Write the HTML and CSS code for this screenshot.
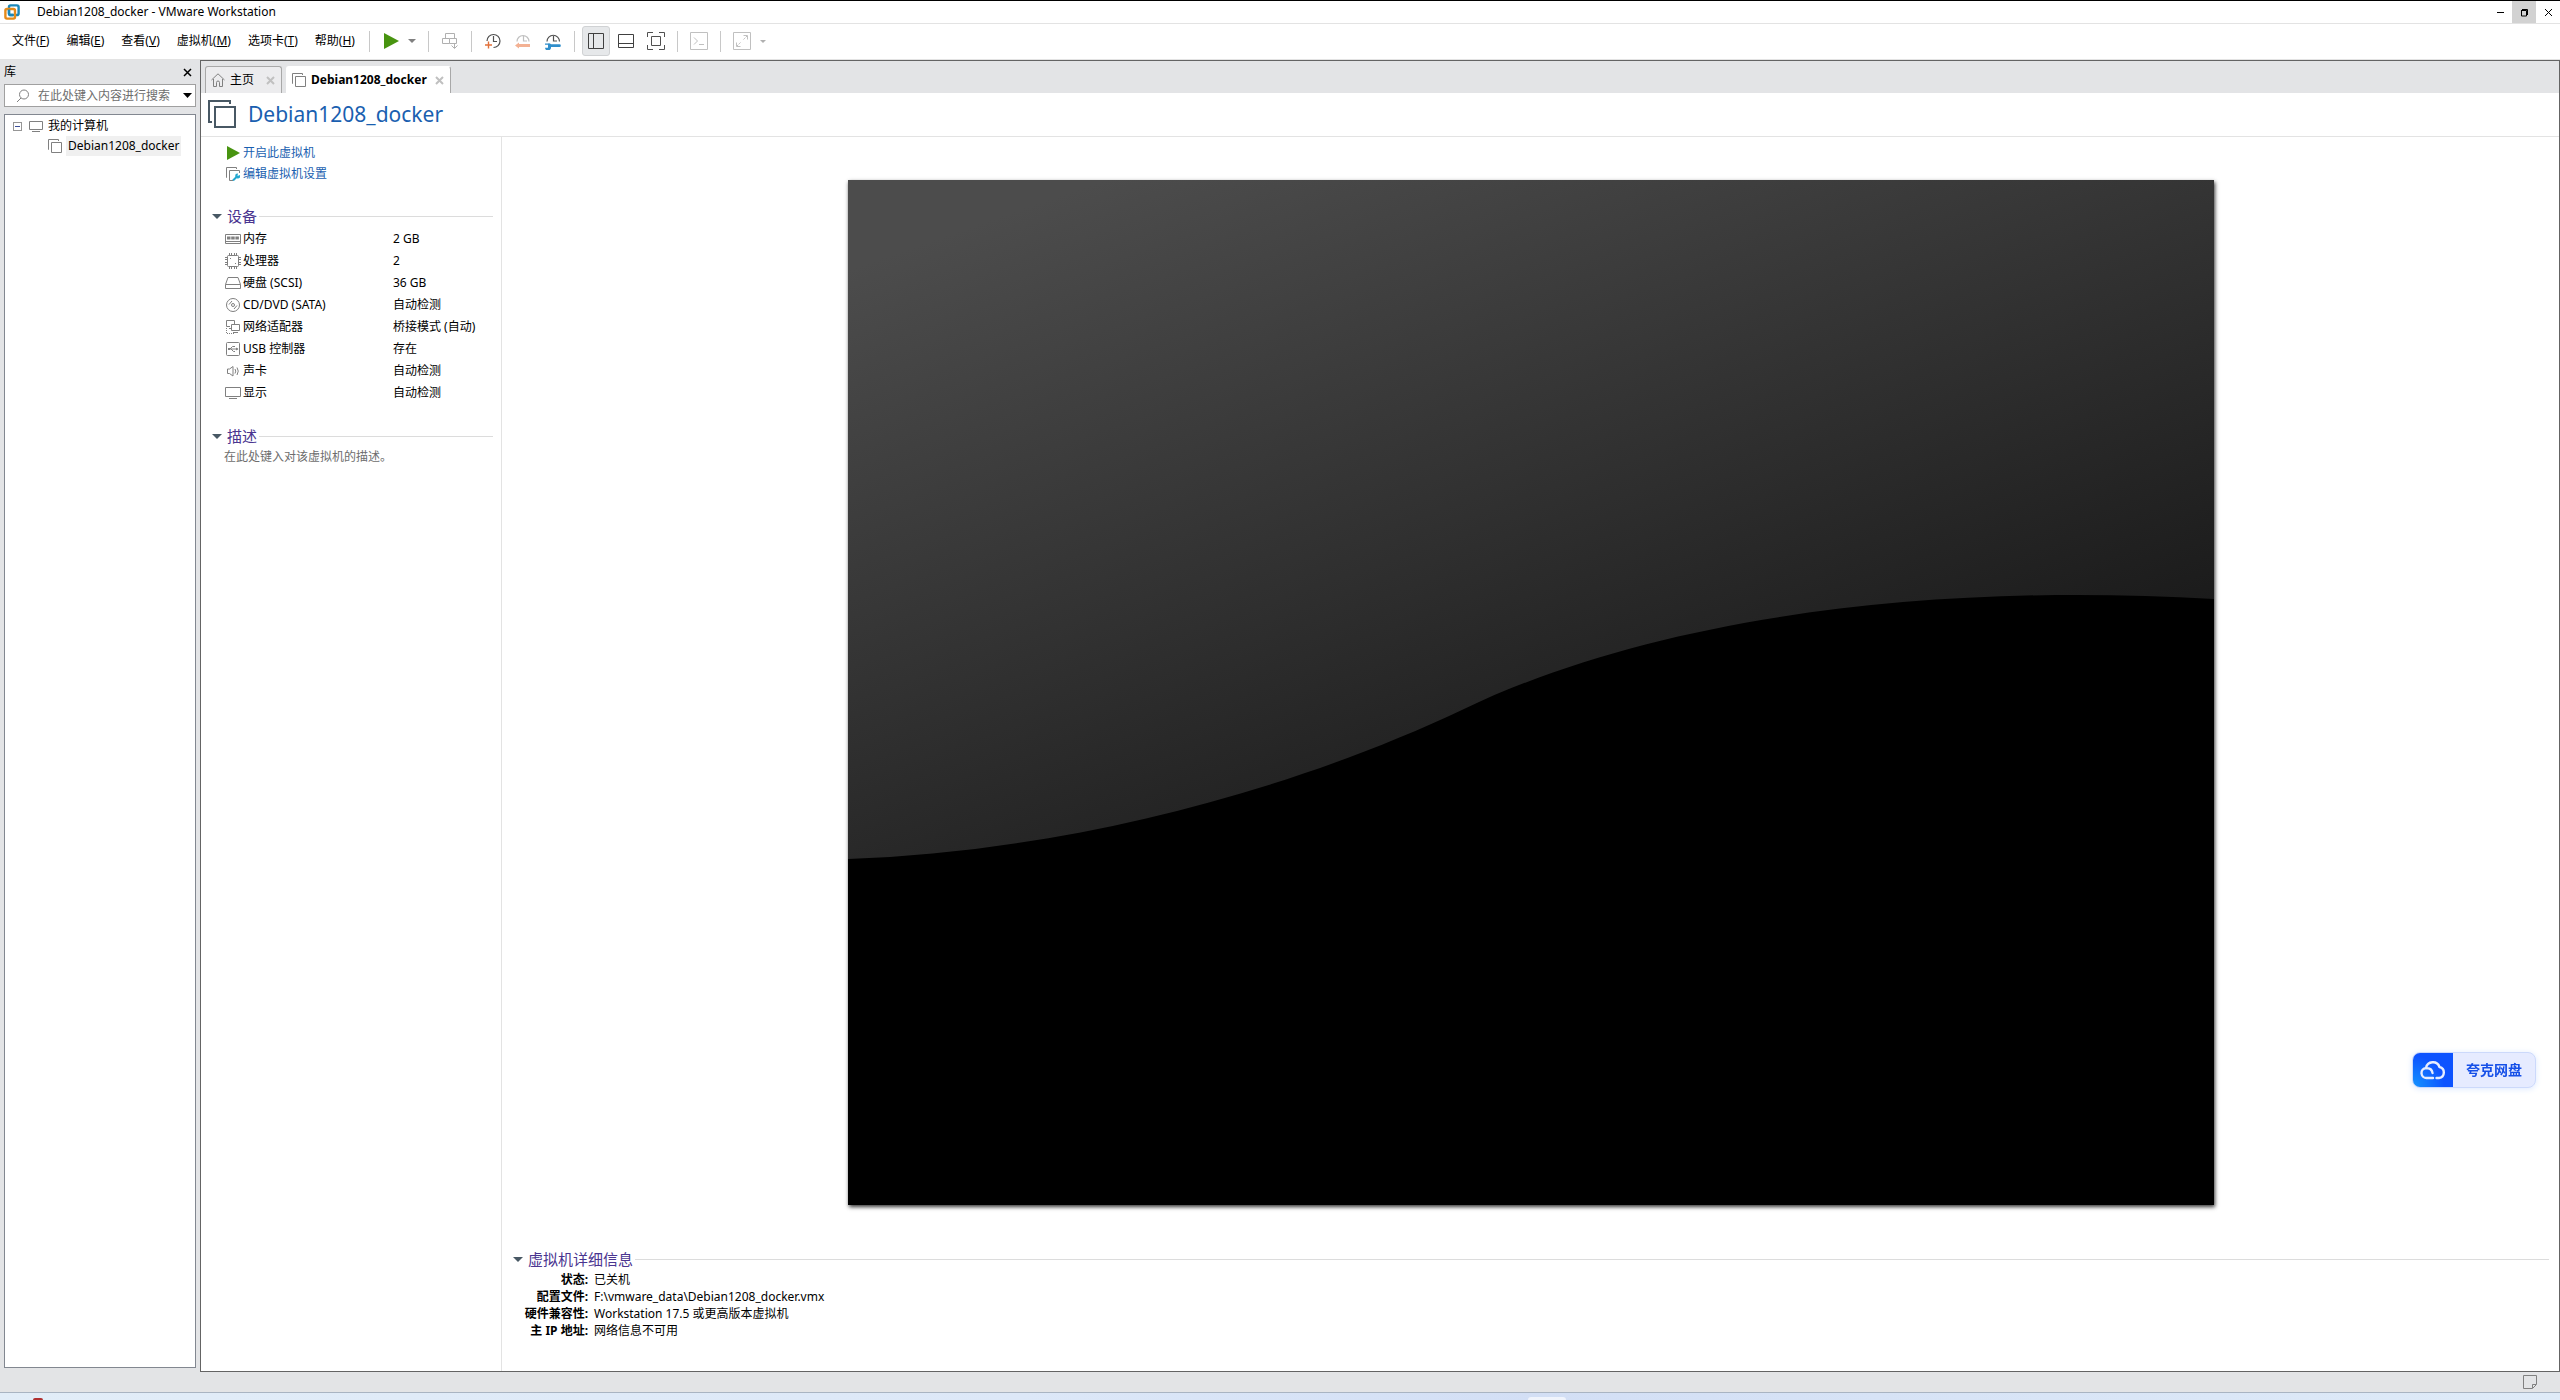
FILE: index.html
```html
<!DOCTYPE html>
<html lang="zh-CN">
<head>
    <meta charset="UTF-8">
    <meta name="viewport" content="width=device-width, initial-scale=1.0">
    <title>Debian1208_docker - VMware Workstation</title>
    <link rel="stylesheet" href="styles.css">
</head>
<body>
    <header class="titlebar">
        <svg class="app-logo" width="16" height="16" viewBox="0 0 16 16" fill="none" stroke-width="2.4">
            <rect x="5" y="1.4" width="9.6" height="9.6" rx="1.6" stroke="#1b87b8"/>
            <rect x="1.4" y="5" width="9.6" height="9.6" rx="1.6" stroke="#e58a1a"/>
            <path d="M5 5.5V9.6a1.4 1.4 0 0 0 1.4 1.4H9" stroke="#1b87b8"/>
        </svg>
        <span class="app-title">Debian1208_docker - VMware Workstation</span>
        <div class="window-buttons">
            <button aria-label="最小化"><svg width="9" height="9"><path d="M1 4.500H8" stroke="#000"/></svg></button>
            <button class="current" aria-label="还原"><svg width="9" height="9" fill="none" stroke="#000"><path d="M1 2.500H6.500V8H1.500V2M2 1.500H7.500V7"/></svg></button>
            <button aria-label="关闭"><svg width="9" height="9"><path d="M1 1L8 8M8 1L1 8" stroke="#000"/></svg></button>
        </div>
    </header>

    <nav class="toolbar">
        <div class="menu">
            <button>文件(<u>F</u>)</button>
            <button>编辑(<u>E</u>)</button>
            <button>查看(<u>V</u>)</button>
            <button>虚拟机(<u>M</u>)</button>
            <button>选项卡(<u>T</u>)</button>
            <button>帮助(<u>H</u>)</button>
        </div>
        <div class="group power">
            <button class="tool" aria-label="开启"><svg width="16" height="16"><path d="M1 0L16 8L1 16Z" fill="#489410"/></svg></button>
            <button class="caret" aria-label="电源选项"><svg width="8" height="4"><path d="M0 0H8L4 4Z" fill="#808080"/></svg></button>
        </div>
        <div class="group">
            <button class="tool" aria-label="发送 Ctrl+Alt+Del">
                <svg width="18" height="18" fill="none" stroke="#b0b0b0"><path d="M4.500 6.500V1.500H13.500V6.500M1.500 6.500H8.500V11.500H1.500ZM8.500 6.500H15.500V11.500H8.500M13.500 11V16M10.500 13.500L13.500 16.500L16.500 13.500"/></svg>
            </button>
        </div>
        <div class="group">
            <button class="tool" aria-label="拍摄快照">
                <svg width="18" height="18" fill="none"><path d="M3 9A6.500 6.500 0 1 1 9.500 15.500M9.500 4V9.500H13" stroke="#505050" stroke-width="1.200"/><path d="M1 13H8M4.500 9.500V16.500" stroke="#e2703a" stroke-width="1.400"/></svg>
            </button>
            <button class="tool" aria-label="恢复快照">
                <svg width="18" height="18" fill="none"><path d="M3 9.500A6 6 0 1 1 15 9.500M9.500 4V9H13" stroke="#c0c0c0" stroke-width="1.200"/><path d="M1 13.500L5 10.500V12H16V15H5V16.500Z" fill="#f3b193"/></svg>
            </button>
            <button class="tool" aria-label="管理快照">
                <svg width="18" height="18" fill="none"><path d="M3 9.500A6.200 6.200 0 1 1 15.500 9.500M9.500 4V9H13" stroke="#505050" stroke-width="1.200"/><path d="M1 11.500H4A3 3 0 0 1 7 12.300H15.500A1.300 1.300 0 0 1 15.500 15H7A3 3 0 0 1 1 15.700H4V12.800H1Z" fill="#2f8ecb"/></svg>
            </button>
        </div>
        <div class="group">
            <button class="tool" aria-label="显示库"><span class="pressed">
                <svg width="18" height="18" fill="none" stroke="#404040"><path d="M1.500 1.500H16.500V16.500H1.500ZM6.500 1.500V16.500"/></svg>
            </span></button>
            <button class="tool" aria-label="显示缩略图栏">
                <svg width="18" height="18" fill="none" stroke="#404040"><path d="M1.500 2.500H16.500V15.500H1.500ZM1.500 11.500H16.500"/></svg>
            </button>
            <button class="tool" aria-label="全屏">
                <svg width="18" height="18" fill="none" stroke="#505050"><path d="M.5 5V.5H6M12 .5H17.500V5M17.500 13V17.500H12M6 17.500H.5V13M4.500 4.500H13.500V13.500H4.500Z"/></svg>
            </button>
        </div>
        <div class="group">
            <button class="tool" aria-label="控制台视图">
                <svg width="18" height="18" fill="none" stroke="#c0c0c0"><path d="M.5 .5H17.500V17.500H.5ZM4 5.500L7.500 9L4 12.500M9 12.500H14"/></svg>
            </button>
        </div>
        <div class="group">
            <button class="tool" aria-label="自由拉伸">
                <svg width="18" height="18" fill="none" stroke="#c0c0c0"><path d="M.5 .5H17.500V17.500H.5ZM10.500 3.500H14.500V7.500M3.500 10.500V14.500H7.500"/><path d="M14 4L10 8M4 14L8 10" stroke-dasharray="2 1"/></svg>
            </button>
            <button class="caret" aria-label="拉伸选项"><svg width="6" height="3"><path d="M0 0H6L3 3Z" fill="#b0b0b0"/></svg></button>
        </div>
    </nav>

    <main class="workspace">
        <aside class="library">
            <div class="library-head">
                <span>库</span>
                <button aria-label="关闭库"><svg width="9" height="9"><path d="M1 1L8 8M8 1L1 8" stroke="#000" stroke-width="1.500"/></svg></button>
            </div>
            <div class="search">
                <svg width="14" height="14" fill="none" stroke="#808080"><circle cx="8" cy="5.500" r="4.500"/><path d="M5 9L1 13"/></svg>
                <input type="text" aria-label="搜索" placeholder="在此处键入内容进行搜索">
                <button aria-label="搜索选项"><svg width="9" height="5"><path d="M0 0H9L4.500 5Z" fill="#000"/></svg></button>
            </div>
            <ul class="tree">
                <li>
                    <svg width="9" height="9" fill="none"><rect x=".5" y=".5" width="8" height="8" stroke="#969696"/><path d="M2 4.500H7" stroke="#3c4f9a"/></svg>
                    <svg class="monitor" width="14" height="11" fill="none" stroke="#808080"><path d="M.5 .5H13.500V8.500H.5ZM3 10.500H11"/></svg>
                    <span>我的计算机</span>
                </li>
                <li class="child">
                    <svg width="14" height="14" fill="none" stroke="#808080"><path d="M1 10.500H.5V.5H10.500V2M3.500 3.500H13.500V13.500H3.500Z"/></svg>
                    <span class="selected">Debian1208_docker</span>
                </li>
            </ul>
        </aside>

        <section class="content">
            <div class="tabs">
                <div class="tab">
                    <svg width="14" height="14" fill="none" stroke="#808080"><path d="M.5 7L7 .8L13.500 7M2.500 6V13.500H5.500V9.500A1.500 1.500 0 0 1 8.500 9.500V13.500H11.500V6"/></svg>
                    <a href="#">主页</a>
                    <button aria-label="关闭标签"><svg width="9" height="9"><path d="M1 1L8 8M8 1L1 8" stroke="#c0c0c0" stroke-width="2"/></svg></button>
                </div>
                <div class="tab active">
                    <svg width="14" height="14" fill="none" stroke="#808080"><path d="M1 10.500H.5V.5H10.500V2M3.500 3.500H13.500V13.500H3.500Z"/></svg>
                    <a href="#">Debian1208_docker</a>
                    <button aria-label="关闭标签"><svg width="9" height="9"><path d="M1 1L8 8M8 1L1 8" stroke="#c0c0c0" stroke-width="2"/></svg></button>
                </div>
            </div>

            <div class="vm-title">
                <svg width="28" height="28" fill="none" stroke="#485864" stroke-width="2"><path d="M4 22H1V1H22V4M7 7H27V27H7Z"/></svg>
                <h1>Debian1208_docker</h1>
            </div>

            <div class="vm">
                <div class="summary">
                    <ul class="actions">
                        <li>
                            <svg width="14" height="14"><path d="M1 0L14 7L1 14Z" fill="#489410"/></svg>
                            <a href="#">开启此虚拟机</a>
                        </li>
                        <li>
                            <svg width="14" height="14" fill="none"><path d="M1 10.500H.5V.5H10.500V2M7 13.500H3.500V3.500H13.500V6" stroke="#808080"/><path d="M7 13.500L11 9.500" stroke="#25a8d0" stroke-width="2"/><path d="M14 8A2.500 2.500 0 1 1 12 6.500L11.500 9Z" fill="#25a8d0"/></svg>
                            <a href="#">编辑虚拟机设置</a>
                        </li>
                    </ul>

                    <h2>设备</h2>
                    <table class="devices">
                        <tr>
                            <th><svg width="16" height="16" fill="none" stroke="#808080"><path d="M.5 3.500H15.500V12.500H.5ZM1 10.500H15"/><path d="M2 7H14" stroke-width="3" stroke-dasharray="3.500 .7"/></svg>内存</th>
                            <td>2 GB</td>
                        </tr>
                        <tr>
                            <th><svg width="16" height="16" fill="none" stroke="#808080"><rect x="2.500" y="2.500" width="11" height="11" rx="1"/><path d="M4.500 0V2M6.500 0V2M9.500 0V2M11.500 0V2M4.500 14V16M6.500 14V16M9.500 14V16M11.500 14V16M0 4.500H2M0 6.500H2M0 9.500H2M0 11.500H2M14 4.500H16M14 6.500H16M14 9.500H16M14 11.500H16M5 5.500H6M10 10.500H11"/></svg>处理器</th>
                            <td>2</td>
                        </tr>
                        <tr>
                            <th><svg width="16" height="16" fill="none" stroke="#808080"><path d="M.5 9.500L3 2.500H13L15.500 9.500V13.500H.5ZM.5 9.500H15.500"/></svg>硬盘 (SCSI)</th>
                            <td>36 GB</td>
                        </tr>
                        <tr>
                            <th><svg width="16" height="16" fill="none" stroke="#808080"><circle cx="8" cy="8" r="6.500"/><circle cx="8" cy="8" r="1.500"/><path d="M4 7.500L7 4M9 12L12 8.500"/></svg>CD/DVD (SATA)</th>
                            <td>自动检测</td>
                        </tr>
                        <tr>
                            <th><svg width="16" height="16" fill="none" stroke="#808080"><path d="M5 7.500H1.500V1.500H9.500V5M6.500 5.500H14.500V11.500H6.500ZM4 9.500H6M8 13.500H13"/><path d="M1.500 9V14.500H10" stroke-dasharray="1 1"/></svg>网络适配器</th>
                            <td>桥接模式 (自动)</td>
                        </tr>
                        <tr>
                            <th><svg width="16" height="16" fill="none" stroke="#808080"><rect x="1.500" y="1.500" width="13" height="13" rx="1"/><path d="M3 8H13M5 8L7.500 5.500H10M6 8L8.500 10.500H10"/><path d="M11 6.500L13.500 8L11 9.500ZM3 7H5V9H3Z" fill="#808080" stroke="none"/></svg>USB 控制器</th>
                            <td>存在</td>
                        </tr>
                        <tr>
                            <th><svg width="16" height="16" fill="none" stroke="#808080"><path d="M2.500 6V10.500H4.500L8 13V3.500L4.500 6ZM10 6Q11.500 8 10 10.500M12 4.500Q14.500 8 12 12"/></svg>声卡</th>
                            <td>自动检测</td>
                        </tr>
                        <tr>
                            <th><svg width="16" height="16" fill="none" stroke="#808080"><path d="M.5 2.500H15.500V11.500H.5ZM4 13.500H12"/></svg>显示</th>
                            <td>自动检测</td>
                        </tr>
                    </table>

                    <h2>描述</h2>
                    <p class="description">在此处键入对该虚拟机的描述。</p>
                </div>

                <div class="preview">
                    <div class="screen-area">
                        <svg class="screen" viewBox="0 0 1366 1025" preserveAspectRatio="none">
                            <defs>
                                <linearGradient id="shade" gradientUnits="userSpaceOnUse" x1="28" y1="80" x2="281" y2="802">
                                    <stop offset="0" stop-color="#4c4c4c"/>
                                    <stop offset="1" stop-color="#1b1b1b"/>
                                </linearGradient>
                            </defs>
                            <rect width="1366" height="1025" fill="#000"/>
                            <path d="M0 0H1366V419C1080 402 806 438 616 529C430 617 205 672 0 679Z" fill="url(#shade)"/>
                        </svg>
                    </div>
                    <h2>虚拟机详细信息</h2>
                    <table class="details">
                        <tr><th>状态:</th><td>已关机</td></tr>
                        <tr><th>配置文件:</th><td>F:\vmware_data\Debian1208_docker.vmx</td></tr>
                        <tr><th>硬件兼容性:</th><td>Workstation 17.5 或更高版本虚拟机</td></tr>
                        <tr><th>主 IP 地址:</th><td>网络信息不可用</td></tr>
                    </table>
                </div>
            </div>
        </section>
    </main>

    <footer class="statusbar">
        <svg width="14" height="14" fill="none" stroke="#808080"><path d="M.5 .5H13.500V9.500L9.500 13.500H.5ZM9.500 13V9.500H13"/></svg>
    </footer>
    <div class="taskbar"><span class="task-badge"></span><span class="task-active"></span></div>

    <button class="quark">
        <span class="quark-icon">
            <svg width="26" height="22" fill="none" stroke="#e6edff" stroke-width="2.400" stroke-linecap="round"><path d="M13 19H7A5 5 0 0 1 6 9A7 7 0 0 1 19.500 8A5.600 5.600 0 0 1 19 19H16.500M6 9Q12 9 12.500 14"/></svg>
        </span>
        <span class="quark-label">夸克网盘</span>
    </button>
</body>
</html>
```

FILE: styles.css
```css
* {
    box-sizing: border-box;
}

body {
    display: flex;
    flex-direction: column;
    min-height: 100vh;
    margin: 0;
    border-top: 1px solid #000;
    background-color: #e3e4e6;
    color: #000;
    font-family: "Noto Sans", "Noto Sans CJK SC", sans-serif;
    font-size: 12px;
    line-height: 16px;
}

button, input {
    padding: 0;
    border: none;
    background: none;
    color: inherit;
    font: inherit;
}

svg {
    display: block;
    flex: none;
}

ul {
    margin: 0;
    padding: 0;
    list-style: none;
}

a {
    color: inherit;
    text-decoration: none;
}

table {
    border-collapse: collapse;
}

th, td {
    padding: 0;
    text-align: left;
    font-weight: normal;
}

/* title bar */
.titlebar {
    display: flex;
    align-items: center;
    height: 23px;
    padding-left: 4px;
    border-bottom: 1px solid #e3e3e3;
    background-color: #fff;
}

.app-title {
    flex: 1;
    margin-left: 17px;
}

.window-buttons {
    display: flex;
    align-self: stretch;
}

.window-buttons button {
    display: flex;
    align-items: center;
    justify-content: center;
    width: 24px;
}

.window-buttons .current {
    background-color: #d2d2d2;
}

/* menu and tools */
.toolbar {
    display: flex;
    align-items: center;
    height: 36px;
    padding: 0 0 1px 4px;
    border-bottom: 1px solid #e3e3e3;
    background-color: #fff;
}

.menu {
    display: flex;
    margin-right: 5px;
}

.menu button {
    padding: 0 9px 0 8px;
}

.group {
    display: flex;
    align-items: center;
    height: 21px;
    padding: 0 6px;
    border-left: 1px solid #c8c8c8;
}

.power {
    padding-right: 10px;
}

.tool {
    display: flex;
    align-items: center;
    justify-content: center;
    width: 30px;
}

.caret {
    display: flex;
    justify-content: center;
    width: 12px;
}

.pressed {
    padding: 5px 4px;
    border: 1px solid #d0d2d4;
    border-radius: 3px;
    background-color: #e6e8ea;
}

.workspace {
    display: flex;
    flex: 1;
}

/* library */
.library {
    display: flex;
    flex-direction: column;
    width: 200px;
    padding: 0 4px 4px;
}

.library-head {
    display: flex;
    align-items: center;
    justify-content: space-between;
    height: 24px;
    padding-right: 4px;
}

.search {
    display: flex;
    align-items: center;
    height: 23px;
    padding: 0 3px 0 11px;
    border: 1px solid #a0a0a0;
    background-color: #fff;
}

.search input {
    flex: 1;
    min-width: 0;
    margin-left: 8px;
}

.search input::placeholder {
    color: #6d6d6d;
}

.tree {
    flex: 1;
    margin-top: 7px;
    padding: 1px 8px;
    border: 1px solid #828790;
    background-color: #fff;
}

.tree li {
    display: flex;
    align-items: center;
    height: 20px;
}

.monitor {
    margin: 0 5px 0 7px;
}

.tree .child {
    padding-left: 35px;
}

.selected {
    margin-left: 4px;
    padding: 2px;
    background-color: #f0f0f0;
}

/* tabs */
.content {
    display: flex;
    flex-direction: column;
    flex: 1;
    border: 1px solid #646464;
    background-color: #fff;
}

.tabs {
    display: flex;
    align-items: flex-end;
    gap: 4px;
    height: 32px;
    padding-left: 4px;
    background-color: #e3e4e6;
}

.tab {
    display: flex;
    align-items: center;
    height: 27px;
    padding: 0 6px 0 5px;
    border: 1px solid #a8a8a8;
    border-bottom: none;
    border-radius: 3px 3px 0 0;
    background-color: #ececee;
}

.tab a {
    margin: 0 12px 0 5px;
}

.active {
    border-color: #fff #a8a8a8 #fff #fff;
    background-color: #fff;
}

.active a {
    margin-right: 8px;
    font-weight: bold;
}

.vm-title {
    display: flex;
    align-items: center;
    gap: 12px;
    height: 44px;
    padding: 0 0 2px 7px;
    border-bottom: 1px solid #e3e3e3;
}

h1 {
    margin: 0;
    color: #1a5fb0;
    font-size: 21px;
    font-weight: normal;
    line-height: 28px;
}

.vm {
    display: flex;
    flex: 1;
}

/* section heading with arrow and rule */
h2 {
    display: flex;
    align-items: center;
    height: 20px;
    margin: 0;
    color: #4a3590;
    font-size: 15px;
    font-weight: normal;
}

h2::before {
    margin-right: 5px;
    border: 5px solid transparent;
    border-top-color: #485864;
    border-bottom: none;
    content: "";
}

h2::after {
    flex: 1;
    height: 1px;
    margin-left: 2px;
    background-color: #dcdcdc;
    content: "";
}

.summary {
    width: 301px;
    padding: 5px 8px 0 11px;
    border-right: 1px solid #e3e3e3;
}

.summary h2 {
    margin-top: 22px;
}

.actions li {
    display: flex;
    align-items: center;
    gap: 3px;
    height: 21px;
    padding-left: 14px;
    color: #1a5fb0;
}

.devices {
    width: 100%;
    margin-top: 2px;
}

.devices th {
    display: flex;
    align-items: center;
    gap: 2px;
    height: 22px;
    padding-left: 13px;
}

.devices td {
    width: 100px;
}

.description {
    margin: 0;
    padding-left: 12px;
    color: #6d6d6d;
    line-height: 22px;
}

/* screen and details */
.preview {
    display: flex;
    flex-direction: column;
    flex: 1;
    padding: 0 10px 32px 11px;
}

.screen-area {
    display: flex;
    flex: 1;
    align-items: center;
    justify-content: center;
    padding: 42px 0 44px;
}

.screen {
    width: 100%;
    max-width: 1366px;
    box-shadow: 1px 2px 4px rgba(0, 0, 0, 0.8);
}

.details {
    margin-top: 2px;
}

.details th {
    width: 81px;
    padding-right: 6px;
    text-align: right;
    font-weight: bold;
    white-space: nowrap;
}

.details tr {
    height: 17px;
}

.statusbar {
    display: flex;
    align-items: center;
    justify-content: flex-end;
    height: 21px;
    padding-right: 23px;
    border-bottom: 1px solid #a9b4c2;
}

.taskbar {
    display: flex;
    align-items: flex-end;
    height: 7px;
    background: linear-gradient(90deg, #e2edf8, #dde8f8 40%, #d3dff5 60%, #dfebf8);
}

.task-badge {
    width: 10px;
    height: 2px;
    margin-left: 33px;
    border-radius: 5px 5px 0 0;
    background-color: #b03030;
}

.task-active {
    width: 38px;
    height: 3px;
    margin-left: 58%;
    border-radius: 3px 3px 0 0;
    background-color: #f0f4fc;
}

/* floating shortcut */
.quark {
    position: fixed;
    right: 24px;
    bottom: 312px;
    display: flex;
    overflow: hidden;
    width: 124px;
    height: 36px;
    border: 1px solid #ccd9fb;
    border-radius: 8px;
    background-color: #e6ebff;
    box-shadow: 0 1px 6px #dce8ff;
}

.quark-icon {
    display: flex;
    align-items: center;
    justify-content: center;
    width: 40px;
    height: 100%;
    background: radial-gradient(circle at 0 100%, #1594ff, #0d53ff 60%);
}

.quark-label {
    flex: 1;
    color: #1650e8;
    font-size: 14px;
    font-weight: bold;
    line-height: 34px;
}
```
